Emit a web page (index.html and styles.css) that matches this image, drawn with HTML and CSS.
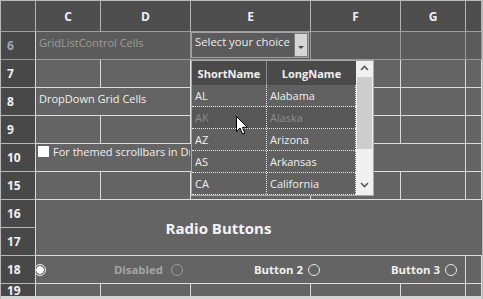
FILE: index.html
```html
<!DOCTYPE html>
<html lang="en">
<head>
    <meta charset="UTF-8">
    <title>Grid Cells</title>
    <link rel="stylesheet" href="styles.css">
</head>
<body>

<div class="sheet">
    <div class="grid">
        <!-- column headers -->
        <div class="hd corner"></div>
        <div class="hd">C</div>
        <div class="hd">D</div>
        <div class="hd">E</div>
        <div class="hd">F</div>
        <div class="hd">G</div>
        <div class="hd"></div>

        <!-- row 6 -->
        <div class="rh dim r6">6</div>
        <div class="c r6 span2 faded">GridListControl Cells</div>
        <div class="c r6 combo-cell">
            <div class="combo">
                <span class="combo-text">Select your choice</span>
                <span class="combo-btn"><i></i></span>
            </div>
        </div>
        <div class="c r6"></div>
        <div class="c r6"></div>
        <div class="c r6"></div>

        <!-- row 7 -->
        <div class="rh">7</div>
        <div class="c"></div>
        <div class="c"></div>
        <div class="c"></div>
        <div class="c"></div>
        <div class="c"></div>
        <div class="c"></div>

        <!-- row 8 -->
        <div class="rh">8</div>
        <div class="c span2 label">DropDown Grid Cells</div>
        <div class="c"></div>
        <div class="c"></div>
        <div class="c"></div>
        <div class="c"></div>

        <!-- row 9 -->
        <div class="rh">9</div>
        <div class="c"></div>
        <div class="c"></div>
        <div class="c"></div>
        <div class="c"></div>
        <div class="c"></div>
        <div class="c"></div>

        <!-- row 10 -->
        <div class="rh">10</div>
        <div class="c span5 check-cell">
            <span class="checkbox"></span>
            <span class="check-text">For themed scrollbars in DropDown Grid</span>
        </div>
        <div class="c"></div>

        <!-- row 15 -->
        <div class="rh">15</div>
        <div class="c"></div>
        <div class="c"></div>
        <div class="c"></div>
        <div class="c"></div>
        <div class="c"></div>
        <div class="c"></div>

        <!-- rows 16-17 -->
        <div class="rh">16</div>
        <div class="c title-cell"><div class="title">Radio Buttons</div></div>
        <div class="rh">17</div>

        <!-- row 18 -->
        <div class="rh">18</div>
        <div class="c span5 radio-cell">
            <span class="radio first checked"></span>
            <span class="radio-group disabled">Disabled <span class="radio"></span></span>
            <span class="radio-group">Button 2 <span class="radio"></span></span>
            <span class="radio-group">Button 3 <span class="radio"></span></span>
        </div>
        <div class="c"></div>

        <!-- row 19 -->
        <div class="rh last">19</div>
        <div class="c last"></div>
        <div class="c last"></div>
        <div class="c last"></div>
        <div class="c last"></div>
        <div class="c last"></div>
        <div class="c last"></div>
    </div>
    <div class="hscroll"></div>

    <!-- dropdown grid list -->
    <div class="droplist">
        <div class="dl-table">
            <div class="dl-row dl-head">
                <div class="dl-a">ShortName</div>
                <div class="dl-b">LongName</div>
            </div>
            <div class="dl-row">
                <div class="dl-a">AL</div>
                <div class="dl-b">Alabama</div>
            </div>
            <div class="dl-row hover">
                <div class="dl-a">AK</div>
                <div class="dl-b">Alaska</div>
            </div>
            <div class="dl-row">
                <div class="dl-a">AZ</div>
                <div class="dl-b">Arizona</div>
            </div>
            <div class="dl-row">
                <div class="dl-a">AS</div>
                <div class="dl-b">Arkansas</div>
            </div>
            <div class="dl-row">
                <div class="dl-a">CA</div>
                <div class="dl-b">California</div>
            </div>
        </div>
        <div class="vscroll">
            <svg class="arrow up" width="17" height="16" viewBox="0 0 17 16"><path d="M5 9 L8.5 5.5 L12 9" fill="none" stroke="#5a5a5a" stroke-width="1.6"/></svg>
            <div class="thumb"></div>
            <svg class="arrow down" width="17" height="16" viewBox="0 0 17 16"><path d="M5 6 L8.5 9.5 L12 6" fill="none" stroke="#5a5a5a" stroke-width="1.6"/></svg>
        </div>
    </div>

    <!-- mouse pointer -->
    <svg class="pointer" width="13" height="20" viewBox="0 0 13 20">
        <path d="M0.5 0.5 L0.5 15.5 L4 12 L6.5 18 L8.8 17 L6.4 11.3 L11.3 11.3 Z" fill="#fff" stroke="#000" stroke-width="1"/>
    </svg>
</div>

</body>
</html>
```

FILE: styles.css
```css
body {
    margin: 0;
    padding: 0;
    font-family: "Open Sans", "Liberation Sans", sans-serif;
    font-size: 11px;
    color: #f0f0f0;
}

.sheet {
    position: relative;
    width: 483px;
    height: 299px;
    box-sizing: border-box;
    border: 1px solid #b8b8b8;
    border-bottom: none;
    background-color: #646464;
    overflow: hidden;
}

.grid {
    display: grid;
    grid-template-columns: 35px 65px 90px 120px 90px 65px 16px;
    grid-template-rows: 31px repeat(9, 28px) 12px;
}

.grid > div {
    box-sizing: border-box;
    overflow: hidden;
    white-space: nowrap;
}

/* column headers */
.hd {
    background-color: #4e4e4e;
    border-right: 1px solid #b4b4b4;
    border-bottom: 1px solid #a0a0a0;
    font-weight: bold;
    font-size: 12px;
    display: flex;
    align-items: center;
    justify-content: center;
}

/* row headers */
.rh {
    background-color: #484848;
    border-right: 1px solid #d8d8d8;
    border-bottom: 1px solid #b8b8b8;
    font-weight: bold;
    font-size: 12px;
    display: flex;
    align-items: center;
    padding-left: 6px;
}

.rh.dim {
    color: #a0a8b0;
    border-bottom-color: #999;
}

/* cells */
.c {
    background-color: #646464;
    border-right: 1px solid #dcdcdc;
    border-bottom: 1px solid #dcdcdc;
}

.c.r6 {
    background-color: #5b5b5b;
    border-color: #9a9a9a;
}

.c.last,
.rh.last {
    border-bottom: none;
}

.span2 {
    grid-column: span 2;
}

.span5 {
    grid-column: span 5;
}

.faded {
    color: #9c9c9c;
    padding: 3px 0 0 3px;
}

.label {
    padding: 3px 0 0 3px;
}

/* combo box in E6 */
.combo-cell {
    padding: 0 1px 1px 0;
}

.combo {
    display: flex;
    justify-content: space-between;
    height: 100%;
    box-sizing: border-box;
    border: 1px solid #a4a4a4;
    padding: 0 0 0 3px;
    color: #ececec;
}

.combo-text {
    line-height: 17px;
    font-size: 11.3px;
}

.combo-btn {
    width: 14px;
    height: 24px;
    box-sizing: border-box;
    border: 1px solid #7c7c7c;
    background-color: #d6d6d6;
    display: flex;
    justify-content: center;
    align-items: flex-end;
    padding-bottom: 7px;
}

.combo-btn i {
    width: 0;
    height: 0;
    border-left: 3px solid transparent;
    border-right: 3px solid transparent;
    border-top: 3px solid #4a4a4a;
}

/* row 10 checkbox */
.check-cell {
    display: flex;
    align-items: flex-start;
    gap: 4px;
    padding: 1px 0 0 2px;
}

.checkbox {
    width: 11px;
    height: 11px;
    margin-top: 1px;
    background-color: #fff;
    flex: none;
}

.check-text {
    width: 137px;
    overflow: hidden;
    line-height: 14px;
    flex: none;
}

/* merged title cell */
.title-cell {
    grid-column: 2 / 8;
    grid-row: span 2;
    border-right: none;
    display: flex;
    align-items: center;
}

.title {
    width: 365px;
    text-align: center;
    font-weight: bold;
    font-size: 15px;
    color: #f4f4f4;
}

.title-cell + .rh {
    grid-column: 1;
}

/* radio row */
.radio-cell {
    display: flex;
    align-items: center;
    font-weight: bold;
    font-size: 11.4px;
}

.radio {
    display: inline-block;
    width: 12px;
    height: 12px;
    box-sizing: border-box;
    border: 1px solid #e8e8e8;
    border-radius: 50%;
    flex: none;
}

.radio.first {
    margin-left: -2px;
    border: 1.5px solid #f4f4f4;
    background: radial-gradient(circle, #fff 3.5px, #6a6a6a 4px);
}

.radio-group {
    width: 137px;
    display: flex;
    align-items: center;
    justify-content: flex-end;
    gap: 5px;
}

.radio-group:first-of-type {
    width: 127px;
}

.radio-group.disabled {
    color: #a4a4a4;
    gap: 8px;
}

.radio-group.disabled .radio {
    border-color: #9c9c9c;
}

.hscroll {
    height: 3px;
    background-color: #d4d4d4;
}

/* dropdown list */
.droplist {
    position: absolute;
    left: 190px;
    top: 59px;
    width: 183px;
    height: 136px;
    box-sizing: border-box;
    border: 1px solid #a8a8a8;
    background-color: #616161;
    display: flex;
}

.dl-table {
    width: 164px;
}

.dl-row {
    display: flex;
    height: 22px;
    box-sizing: border-box;
    border-bottom: 1px dotted #e8e8e8;
}

.dl-row > div {
    box-sizing: border-box;
    display: flex;
    align-items: center;
    padding-left: 3px;
}

.dl-a {
    width: 75px;
    border-right: 1px dotted #e8e8e8;
}

.dl-b {
    width: 89px;
    border-right: 1px dotted #e8e8e8;
}

.dl-head {
    height: 24px;
    background-color: #4a4a4a;
    border-bottom: none;
    font-weight: bold;
}

.dl-head > div {
    justify-content: center;
    padding-left: 0;
    border-right: 1px solid #8c8c8c;
}

.dl-head .dl-b {
    border-right: none;
}

.dl-row.hover {
    background-color: #575757;
    color: #8c8c8c;
}

.vscroll {
    width: 17px;
    background-color: #f0f0f0;
    display: flex;
    flex-direction: column;
    align-items: center;
}

.thumb {
    width: 15px;
    height: 72px;
    background-color: #cdcdcd;
}

.arrow.down {
    margin-top: auto;
    margin-bottom: 2px;
}

.pointer {
    position: absolute;
    left: 235px;
    top: 115px;
}
```
